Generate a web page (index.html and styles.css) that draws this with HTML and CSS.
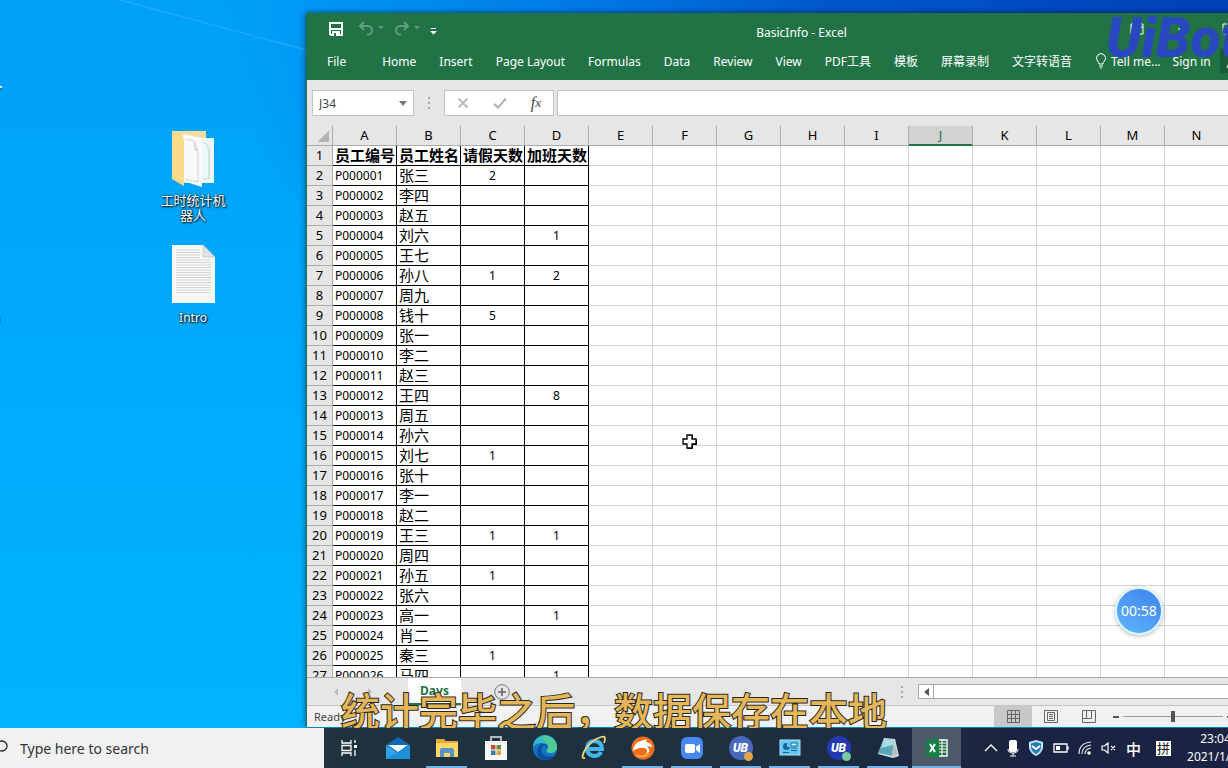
FILE: index.html
```
<!DOCTYPE html>
<html lang="zh-CN">

<head>
  <meta charset="UTF-8">
  <meta name="viewport" content="width=device-width, initial-scale=1.0">
  <title>BasicInfo - Excel</title>
  <link rel="stylesheet" href="styles.css">
</head>

<body>
  <main class="desktop">
    <svg class="light" width="310" height="330" viewBox="0 0 310 330">
      <path d="M120 0L306 50" stroke="#39b4ff" stroke-width="1.500" opacity=".5" />
      <path d="M0 87H2" stroke="#fff" stroke-width="2" />
      <path d="M0 89H2" stroke="#123" opacity=".6" />
      <path d="M0 317V323" stroke="#123" opacity=".6" />
    </svg>
    <a class="desktop-icon folder" href="#">
      <svg width="48" height="60" viewBox="0 0 48 60">
        <path d="M3 2H37V10H43V54H14L3 50Z" fill="#f3dc9c" />
        <path d="M26 9H45V54H33V58L26 52Z" fill="#eef8fa" />
        <path d="M34 12L39 17V20H40V50H34" fill="none" stroke="#c5cbcf" />
        <path d="M14 5L33 9V58L14 52Z" fill="#fafafa" />
        <path d="M16 10L25 12L29 22V53L16 50" fill="none" stroke="#d2d4d6" />
        <path d="M24 12L29 22H26Z" fill="#d5d8da" />
        <path d="M3 2L12 6Q15 8 15 12V57L3 50Z" fill="#fadb89" />
      </svg>
      <span>工时统计机<br>器人</span>
    </a>
    <a class="desktop-icon document" href="#">
      <svg width="48" height="60" viewBox="0 0 48 60">
        <path d="M3 1H34L46 13V59H3Z" fill="#f8f8f8" />
        <path d="M34 1V13H46Z" fill="#dfe3e6" stroke="#b5babd" stroke-width=".6" />
        <path d="M7 6H31M7 8.500H31M7 11H31M7 13.500H31M7 16H42M7 18.500H42M7 21H42M7 23.500H42M7 26H42M7 28.500H42M7 31H42M7 33.500H42M7 36H42M7 38.500H42M7 41H42M7 43.500H42M7 46H42M7 48.500H42" stroke="#cfcfcf" stroke-width=".9" />
      </svg>
      <span>Intro</span>
    </a>

    <section class="window">
      <header class="ribbon">
        <div class="titlebar">
          <div class="quick-access">
            <button aria-label="Save"><svg width="16" height="16" viewBox="0 0 16 16"><path d="M2 2H14V14H3L2 13Z" fill="none" stroke="#fff" stroke-width="2" /><path d="M2 8H14" stroke="#fff" stroke-width="2" /><path d="M4 10H12V15H4Z" fill="#fff" /><path d="M6 12H8V15H6Z" fill="#217346" /></svg></button>
            <button class="faded" aria-label="Undo"><svg width="26" height="16" viewBox="0 0 26 16"><path d="M6 1L2 5L6 9M2 5H9Q14 5 14 9.500T9 13.500" fill="none" stroke="#fff" stroke-width="2" /><path d="M20 5H26L23 8Z" fill="#fff" /></svg></button>
            <button class="faded" aria-label="Redo"><svg width="26" height="16" viewBox="0 0 26 16"><path d="M10 1L14 5L10 9M14 5H7Q2 5 2 9.500T7 13.500" fill="none" stroke="#fff" stroke-width="2" /><path d="M20 5H26L23 8Z" fill="#fff" /></svg></button>
            <button aria-label="Customize"><svg width="7" height="16" viewBox="0 0 7 16"><path d="M1 7.500H6" stroke="#fff" /><path d="M0 10H7L3.500 13.500Z" fill="#fff" /></svg></button>
          </div>
          <h1>BasicInfo - Excel</h1>
          <div class="window-buttons">
            <button aria-label="Ribbon options"><svg width="14" height="12" viewBox="0 0 14 12"><path d="M1 1H13V11H1ZM1 4H13" fill="none" stroke="#fff" /></svg></button>
            <button aria-label="Minimize"><svg width="12" height="12" viewBox="0 0 12 12"><path d="M1 6H11" stroke="#fff" /></svg></button>
            <button aria-label="Restore"><svg width="12" height="12" viewBox="0 0 12 12"><path d="M1 1H11V11H1Z" fill="none" stroke="#fff" /></svg></button>
          </div>
        </div>
        <nav class="tabs">
          <a class="file" href="#">File</a>
          <a href="#">Home</a>
          <a href="#">Insert</a>
          <a href="#">Page Layout</a>
          <a href="#">Formulas</a>
          <a href="#">Data</a>
          <a href="#">Review</a>
          <a href="#">View</a>
          <a href="#">PDF工具</a>
          <a href="#">模板</a>
          <a href="#">屏幕录制</a>
          <a href="#">文字转语音</a>
          <a class="tell-me" href="#"><svg width="12" height="16" viewBox="0 0 12 16"><path d="M4 11Q4 9.500 2.500 8A4.500 4.500 0 1 1 9.500 8Q8 9.500 8 11ZM4 13H8M5 15H7" fill="none" stroke="#fff" /></svg>Tell me...</a>
          <a class="sign-in" href="#">Sign in</a>
          <a class="share" href="#"><svg width="14" height="14" viewBox="0 0 14 14"><circle cx="7" cy="4" r="3" fill="none" stroke="#fff" /><path d="M1 14Q2 8 7 8T13 14" fill="none" stroke="#fff" /></svg>Share</a>
        </nav>
      </header>

      <div class="formula-bar">
        <div class="name-box">
          <input type="text" value="J34" aria-label="Name box">
          <svg width="8" height="5" viewBox="0 0 8 5"><path d="M0 0H8L4 5Z" fill="#777" /></svg>
        </div>
        <svg class="grip" width="2" height="12" viewBox="0 0 2 12"><path d="M0 0H2V2H0ZM0 5H2V7H0ZM0 10H2V12H0Z" fill="#a8a8a8" /></svg>
        <div class="formula-buttons">
          <button aria-label="Cancel"><svg width="12" height="12" viewBox="0 0 12 12"><path d="M1.500 1.500L10.500 10.500M10.500 1.500L1.500 10.500" stroke="#b8b8b8" stroke-width="1.800" /></svg></button>
          <button aria-label="Enter"><svg width="14" height="12" viewBox="0 0 14 12"><path d="M1 7L5 10.500L13 1.500" fill="none" stroke="#b8b8b8" stroke-width="2.400" /></svg></button>
          <button class="fx" aria-label="Insert function">f<small>x</small></button>
        </div>
        <input class="formula" type="text" aria-label="Formula">
      </div>

      <div class="sheet">
        <table>
          <thead>
            <tr id="columns"></tr>
          </thead>
          <tbody id="rows"></tbody>
        </table>
      </div>

      <div class="sheet-tabs">
        <div class="arrows">
          <svg width="4" height="8" viewBox="0 0 4 8"><path d="M4 0V8L0 4Z" fill="#bbb" /></svg>
          <svg width="4" height="8" viewBox="0 0 4 8"><path d="M0 0V8L4 4Z" fill="#bbb" /></svg>
        </div>
        <button class="sheet-tab">Days</button>
        <button class="add" aria-label="New sheet"><svg width="16" height="16" viewBox="0 0 16 16"><circle cx="8" cy="8" r="7.300" fill="none" stroke="#777" /><path d="M4 8H12M8 4V12" stroke="#666" stroke-width="1.600" /></svg></button>
        <svg class="grip" width="2" height="12" viewBox="0 0 2 12"><path d="M0 0H2V2H0ZM0 5H2V7H0ZM0 10H2V12H0Z" fill="#a8a8a8" /></svg>
        <div class="scrollbar">
          <button aria-label="Scroll left"><svg width="5" height="8" viewBox="0 0 5 8"><path d="M5 0V8L0 4Z" fill="#555" /></svg></button>
        </div>
      </div>

      <footer class="status">
        <span>Ready</span>
        <div class="views">
          <button class="active" aria-label="Normal"><svg width="13" height="13" viewBox="0 0 13 13"><path d="M.500 .500H12.500V12.500H.500ZM4.500 0V13M8.500 0V13M0 4.500H13M0 8.500H13" fill="none" stroke="#666" /></svg></button>
          <button aria-label="Page layout"><svg width="14" height="13" viewBox="0 0 14 13"><path d="M.500 .500H13.500V12.500H.500ZM3.500 2.500H10.500V10.500H3.500ZM5 4.500H9M5 6.500H9M5 8.500H9" fill="none" stroke="#666" /></svg></button>
          <button aria-label="Page break"><svg width="14" height="13" viewBox="0 0 14 13"><path d="M.500 .500H13.500V12.500H.500ZM0 8.500H9.500V0M4.500 0V8" fill="none" stroke="#666" /></svg></button>
        </div>
        <div class="zoom">
          <svg width="6" height="2" viewBox="0 0 6 2"><path d="M0 0H6V2H0Z" fill="#555" /></svg>
          <input type="range" min="0" max="100" value="50" aria-label="Zoom">
          <svg width="8" height="8" viewBox="0 0 8 8"><path d="M0 4H8M4 0V8" stroke="#555" stroke-width="2" /></svg>
        </div>
      </footer>
    </section>

    <svg class="cursor" width="15" height="15" viewBox="0 0 15 15"><path d="M5 1H10V5H14V10H10V14H5V10H1V5H5Z" fill="#fff" stroke="#000" stroke-width="1.300" /><path d="M10.500 1.500V5M14.500 5.500V10.500H10.500V14.500H5.500" fill="none" stroke="#000" /></svg>
    <div class="timer">00:58</div>
    <div class="watermark">UiBot</div>
    <p class="subtitle">统计完毕之后，数据保存在本地</p>
  </main>

  <footer class="taskbar">
    <label class="search">
      <svg width="12" height="16" viewBox="0 0 12 16"><circle cx="6" cy="6" r="5" fill="none" stroke="#222" stroke-width="1.300" /></svg>
      <input type="text" placeholder="Type here to search">
    </label>
    <nav class="apps">
      <button aria-label="Task view"><svg width="18" height="18" viewBox="0 0 18 18"><path d="M2 1V4H11V1M2 17V14H11V17M2 6.500H11V11.500H2ZM15 1V4M15 11V17" fill="none" stroke="#fff" stroke-width="1.300" /><path d="M14 6H17V9H14Z" fill="#fff" /></svg></button>
      <button aria-label="Mail"><svg width="26" height="24" viewBox="0 0 26 24"><path d="M1 9L13 1L25 9V23H1Z" fill="#1267b5" /><path d="M1 9L13 17L25 9V23H1Z" fill="#2da5e8" /><path d="M3 9H23L13 16Z" fill="#f4fbff" /><path d="M1 23L25 10V23Z" fill="#1683ce" opacity=".6" /></svg></button>
      <button class="open" aria-label="File Explorer"><svg width="24" height="22" viewBox="0 0 24 22"><path d="M1 2H9L11 4H23V20H1Z" fill="#e8a93a" /><path d="M1 6H23V20H1Z" fill="#ffd867" /><path d="M5 20V13Q5 11 7 11H17Q19 11 19 13V20H15V16H9V20Z" fill="#5794c3" /></svg></button>
      <button aria-label="Store"><svg width="24" height="26" viewBox="0 0 24 26"><path d="M7 8V2H17V8" fill="none" stroke="#e5e5e5" stroke-width="1.500" /><path d="M1 6H23V25H1Z" fill="#f7f7f7" /><path d="M7 10H11.500V14.500H7Z" fill="#c74d31" /><path d="M12.500 10H17V14.500H12.500Z" fill="#6d8b35" /><path d="M7 15.500H11.500V20H7Z" fill="#347cae" /><path d="M12.500 15.500H17V20H12.500Z" fill="#dba43c" /></svg></button>
      <button aria-label="Edge"><svg width="26" height="26" viewBox="0 0 26 26"><circle cx="13" cy="13" r="12" fill="#1475c4" /><path d="M1 12A12 12 0 0 1 25 12Q25 18 18 18Q14 18 15 15Q17 8 10 8Q4 8 1 12Z" fill="#35b8d4" /><path d="M14 1A12 12 0 0 1 25 13Q24 18 18 18Q14 18 15 15Q18 7 8 3Z" fill="#55cf83" opacity=".8" /><path d="M15 15Q16 11 12 10Q8 13 10 18Q13 23 22 21Q17 26 11 25Q4 22 5 15Q7 9 12 9Q18 9 15 15Z" fill="#0c4f9d" /></svg></button>
      <button aria-label="Internet Explorer"><svg width="26" height="26" viewBox="0 0 26 26"><path d="M20 17Q18 21 13 21Q6 20 6 13Q7 6 14 6Q21 7 21 14H7" fill="none" stroke="#45b6ec" stroke-width="4" /><path d="M4 23Q-1 24 4 15Q10 5 20 2Q26 0 23 8" fill="none" stroke="#ecd173" stroke-width="1.800" /></svg></button>
      <button class="open" aria-label="Browser"><svg width="24" height="24" viewBox="0 0 24 24"><circle cx="12" cy="12" r="11.500" fill="#ef6f18" /><path d="M2 15Q3 6 10 5L16 3L15 6Q21 7 21 11L16 10Q21 15 15 18Q18 13 13 12Q7 11 2 15Z" fill="#fff" /><path d="M5 19Q12 23 18 17" fill="none" stroke="#ffa84f" stroke-width="2" /></svg></button>
      <button class="open" aria-label="Meeting"><svg width="24" height="24" viewBox="0 0 24 24"><rect x="1" y="1" width="22" height="22" rx="6" fill="#4688ef" /><rect x="5" y="8" width="10" height="9" rx="2" fill="#fff" /><path d="M16 11L20 8V17L16 14Z" fill="#fff" /></svg></button>
      <button class="open bot" aria-label="UiBot Creator"><span>UB</span><i class="badge amber"></i></button>
      <button class="open" aria-label="Control Panel"><svg width="22" height="18" viewBox="0 0 22 18"><rect x="1" y="1" width="20" height="15" fill="#65c7ef" stroke="#a9e6ff" /><path d="M8 4A3.500 3.500 0 1 0 11 8H8Z" fill="#176598" /><path d="M12 4H18V7H12ZM12 9H18M12 11.500H18M4 13.500H10" fill="#e9faff" stroke="#176598" /></svg></button>
      <button class="open bot dark" aria-label="UiBot Worker"><span>UB</span><i class="badge green"></i></button>
      <button class="open" aria-label="Notepad"><svg width="24" height="24" viewBox="0 0 24 24"><path d="M8 2L19 3L23 20L17 22L2 18Z" fill="#d8e8e8" /><path d="M8 3L18 4L16 20L2 17Z" fill="#5ba7b9" /><path d="M8 3L18 4L17 9L5 12Z" fill="#a9dce3" /><path d="M18 5L22 19L16 21Z" fill="#b9c1be" /></svg></button>
      <button class="open current" aria-label="Excel"><svg width="24" height="20" viewBox="0 0 24 20"><path d="M10 2H22V18H10Z" fill="#1c6b3c" stroke="#fff" stroke-width="1.400" /><path d="M12 5H21M12 8H21M12 11H21M12 14H21M17 2V18" stroke="#fff" /><path d="M1 2L14 0V20L1 18Z" fill="#148047" /><path d="M5 6L10 14M10 6L5 14" stroke="#fff" stroke-width="2" /></svg></button>
    </nav>
    <div class="tray">
      <svg width="14" height="8" viewBox="0 0 14 8"><path d="M1 7L7 1L13 7" fill="none" stroke="#fff" stroke-width="1.400" /></svg>
      <svg width="12" height="18" viewBox="0 0 12 18"><rect x="2" y="1" width="8" height="12" rx="2" fill="#fff" /><path d="M1 10Q1 14 6 14T11 10M6 14V17M3 17H9" fill="none" stroke="#fff" /></svg>
      <svg width="16" height="16" viewBox="0 0 16 16"><path d="M8 0L15 2V8Q14 13 8 16Q2 13 1 8V2Z" fill="#bfe8ff" /><path d="M8 2L13 3.500V8Q12 12 8 14Q4 12 3 8V3.500Z" fill="#2878b6" /><path d="M4 6L8 9L12 6" fill="none" stroke="#fff" stroke-width="2" /></svg>
      <svg width="16" height="10" viewBox="0 0 16 10"><path d="M1 1H14V9H1ZM15 3.500V6.500" fill="none" stroke="#fff" stroke-width="1.300" /><path d="M3 3H7V7H3Z" fill="#fff" /></svg>
      <svg width="14" height="14" viewBox="0 0 14 14"><path d="M1 13Q1 2 13 1M4 13Q4 5 13 4M7 13Q7 8 13 7" fill="none" stroke="#dce3ed" stroke-width="1.200" /><circle cx="11" cy="12" r="1.800" fill="#fff" /></svg>
      <svg width="16" height="12" viewBox="0 0 16 12"><path d="M1 4H3.500L7 1V11L3.500 8H1ZM10 4L14 8M14 4L10 8" fill="none" stroke="#fff" stroke-width="1.200" /></svg>
      <span class="ime">中</span>
      <span class="pinyin">拼</span>
      <div class="clock"><span>23:04</span><span>2021/1/20</span></div>
    </div>
  </footer>

  <script>
    // id is the row position, the rest is [name, days off, overtime]
    const staff = [
      ['张三', 2, ''],
      ['李四', '', ''],
      ['赵五', '', ''],
      ['刘六', '', 1],
      ['王七', '', ''],
      ['孙八', 1, 2],
      ['周九', '', ''],
      ['钱十', 5, ''],
      ['张一', '', ''],
      ['李二', '', ''],
      ['赵三', '', ''],
      ['王四', '', 8],
      ['周五', '', ''],
      ['孙六', '', ''],
      ['刘七', 1, ''],
      ['张十', '', ''],
      ['李一', '', ''],
      ['赵二', '', ''],
      ['王三', 1, 1],
      ['周四', '', ''],
      ['孙五', 1, ''],
      ['张六', '', ''],
      ['高一', '', 1],
      ['肖二', '', ''],
      ['秦三', 1, ''],
      ['马四', '', 1]
    ];
    const letters = 'ABCDEFGHIJKLMNO'.split('');

    document.querySelector('#columns').innerHTML = '<th class="corner"></th>' + letters.map(letter =>
      `<th class="${letter === 'J' ? 'selected' : ''}">${letter}</th>`).join('');

    const records = [['员工编号', '员工姓名', '请假天数', '加班天数']];
    staff.forEach((person, i) => {
      records.push(['P' + String(i + 1).padStart(6, '0'), ...person]);
    });

    document.querySelector('#rows').innerHTML = records.map((record, i) => {
      const cells = letters.map((letter, j) => j < 4
        ? `<td class="filled col-${letter}">${record[j]}</td>`
        : '<td></td>').join('');
      return `<tr class="${i === 0 ? 'heading' : ''}"><th>${i + 1}</th>${cells}</tr>`;
    }).join('');
  </script>
</body>

</html>
```
FILE: styles.css
```
* {
  box-sizing: border-box;
  margin: 0;
  padding: 0;
}

body {
  display: flex;
  flex-direction: column;
  height: 100vh;
  overflow: hidden;
  font-family: 'Noto Sans', 'Noto Sans CJK SC', sans-serif;
  font-size: 12px;
}

a {
  color: inherit;
  text-decoration: none;
}

button {
  display: flex;
  align-items: center;
  justify-content: center;
  border: none;
  background: transparent;
  font: inherit;
}

input {
  min-width: 0;
  border: none;
  outline: none;
  background: transparent;
  font: inherit;
}

.desktop {
  position: relative;
  flex: 1;
  min-height: 0;
  overflow: hidden;
  background: radial-gradient(ellipse 1000px 600px at 100% 0, #0040b8, #0058cc 40%, #007ae6 65%, #0098f4 92%, #00a0f800), linear-gradient(#00a0f8, #00b4fe);
}

.light {
  position: absolute;
  top: 0;
  left: 0;
}

/* desktop shortcuts */
.desktop-icon {
  position: absolute;
  left: 153px;
  display: flex;
  flex-direction: column;
  align-items: center;
  gap: 4px;
  width: 80px;
  color: white;
  line-height: 15px;
  font-size: 13px;
  text-align: center;
  text-shadow: 1px 1px 2px #000, 0 0 2px #000;
}

.folder {
  top: 129px;
}

.document {
  top: 244px;
}

.document span {
  padding-top: 2px;
  font-size: 12px;
}

/* excel window */
.window {
  position: absolute;
  top: 13px;
  right: -68px;
  bottom: 1px;
  left: 306px;
  display: flex;
  flex-direction: column;
  border-left: 1px solid #217346;
  background: #e6e6e6;
  box-shadow: 0 0 6px rgba(0, 0, 0, 0.6);
}

.ribbon {
  height: 67px;
  background: #217346;
  color: white;
}

.titlebar {
  display: grid;
  grid-template-columns: 1fr auto 1fr;
  align-items: center;
  height: 32px;
}

.quick-access {
  display: flex;
  gap: 10px;
  margin-left: 21px;
}

.quick-access .faded {
  opacity: 0.3;
}

.quick-access button:first-child {
  margin-right: 4px;
}

.titlebar h1 {
  padding-top: 6px;
  font-size: 12px;
  font-weight: 400;
}

.window-buttons {
  display: flex;
  justify-content: flex-end;
  gap: 33px;
  padding-right: 62px;
}

.tabs {
  display: flex;
  align-items: center;
  gap: 23px;
  height: 32px;
  padding-left: 20px;
  white-space: nowrap;
}

.tabs .file {
  margin-right: 13px;
}

.tell-me {
  display: flex;
  align-items: center;
  gap: 4px;
}

.tabs .sign-in {
  margin-left: -11px;
}

.share {
  display: flex;
  align-items: center;
  gap: 4px;
  height: 24px;
  margin-left: -14px;
  padding: 0 6px;
  background: #185c37;
}

.formula-bar {
  display: flex;
  align-items: center;
  height: 46px;
  padding-left: 5px;
}

.name-box {
  display: flex;
  align-items: center;
  width: 102px;
  height: 26px;
  padding: 0 6px;
  border: 1px solid #c3c3c3;
  background: white;
}

.name-box input {
  flex: 1;
  color: #444;
}

.formula-bar .grip {
  margin: 0 14px;
}

.formula-buttons {
  display: flex;
  justify-content: space-around;
  width: 110px;
  height: 26px;
  border: 1px solid #c3c3c3;
  background: white;
}

.fx {
  color: #444;
  font-family: 'Liberation Serif', serif;
  font-size: 16px;
  font-style: italic;
}

.formula {
  flex: 1;
  height: 26px;
  margin-left: 3px;
  border: 1px solid #c3c3c3;
  background: white;
}

/* cells */
.sheet {
  flex: 1;
  min-height: 0;
  overflow: hidden;
  background: white;
}

table {
  width: 986px;
  table-layout: fixed;
  border-collapse: separate;
  border-spacing: 0;
}

th,
td {
  height: 20px;
  border-right: 1px solid #d4d4d4;
  border-bottom: 1px solid #d4d4d4;
  line-height: 19px;
  white-space: nowrap;
  overflow: hidden;
}

th {
  border-color: #ababab;
  background: #e6e6e6;
  font-size: 13px;
  font-weight: 400;
}

.corner {
  width: 26px;
  background: linear-gradient(135deg, #e6e6e6 50%, #b4b4b4 50%) 10px 4px / 12px 12px no-repeat #e6e6e6;
}

th.selected {
  border-bottom-color: #217346;
  background: #d2d2d2;
  box-shadow: inset 0 -1px #217346;
  color: #217346;
}

.filled {
  border-color: #000;
  font-size: 12px;
  text-align: center;
}

.col-A,
.col-B {
  padding-left: 2px;
  text-align: left;
}

.col-B,
.heading .filled {
  font-size: 15px;
}

.heading .filled {
  padding-left: 2px;
  font-weight: 700;
  text-align: left;
}

/* bottom bars */
.sheet-tabs {
  display: flex;
  align-items: center;
  height: 28px;
  border-top: 1px solid #ababab;
}

.arrows {
  display: flex;
  justify-content: space-between;
  width: 101px;
  padding: 0 36px 0 27px;
}

.sheet-tab {
  width: 53px;
  height: 27px;
  border-bottom: 2px solid #217346;
  background: white;
  color: #217346;
  font-size: 12px;
  font-weight: 700;
}

.add {
  margin-left: 33px;
}

.sheet-tabs .grip {
  margin-left: auto;
}

.scrollbar {
  width: 378px;
  height: 15px;
  margin-left: 15px;
  border: 1px solid #ababab;
  background: white;
}

.scrollbar button {
  width: 15px;
  height: 13px;
  border-right: 1px solid #ababab;
}

.status {
  display: flex;
  align-items: center;
  height: 22px;
  padding-left: 7px;
  border-top: 1px solid #c6c6c6;
  background: #f1f1f1;
  color: #444;
  font-size: 11px;
}

.views {
  display: flex;
  align-self: stretch;
  margin-left: auto;
}

.views button {
  width: 38px;
}

.views .active {
  background: #c8c8c8;
}

.zoom {
  display: flex;
  align-items: center;
  gap: 4px;
  width: 188px;
  padding-left: 5px;
}

.zoom input {
  width: 100px;
  height: 12px;
  appearance: none;
  background: linear-gradient(#999, #999) center / 100% 1px no-repeat;
}

.zoom input::-webkit-slider-thumb {
  appearance: none;
  width: 4px;
  height: 11px;
  background: #555;
}

/* overlays */
.cursor {
  position: absolute;
  top: 434px;
  left: 682px;
}

.timer {
  position: absolute;
  right: 65px;
  bottom: 93px;
  width: 48px;
  height: 48px;
  border: 2px solid #d9f5ff;
  border-radius: 50%;
  background: linear-gradient(35deg, #60b6fb, #3c82ec);
  box-shadow: 0 1px 4px rgba(0, 0, 0, 0.3);
  color: white;
  font-size: 14px;
  line-height: 44px;
  text-align: center;
}

.watermark {
  position: absolute;
  top: 6px;
  left: 1106px;
  color: #2947be;
  font-family: Roboto, sans-serif;
  font-size: 55px;
  font-style: italic;
  font-weight: 900;
  line-height: 64px;
}

.subtitle {
  position: absolute;
  bottom: -10px;
  left: 341px;
  color: #e2b659;
  font-family: 'Noto Sans CJK SC', sans-serif;
  font-size: 39px;
  font-weight: 500;
  line-height: 58px;
  white-space: nowrap;
  -webkit-text-stroke: 2px #2c2718;
  paint-order: stroke fill;
}

/* taskbar */
.taskbar {
  display: flex;
  height: 40px;
  background: linear-gradient(90deg, #20363f, #1e303f 60%, #1a2342 85%);
  color: white;
}

.search {
  display: flex;
  align-items: center;
  gap: 12px;
  width: 324px;
  overflow: hidden;
  background: #f1f1f1;
}

.search svg {
  flex: none;
  margin-left: -4px;
}

.search input {
  flex: 1;
  font-size: 14px;
}

.search input::placeholder {
  color: #333;
}

.apps {
  display: flex;
}

.apps button {
  position: relative;
  width: 49px;
}

.open::after {
  content: '';
  position: absolute;
  right: 4px;
  bottom: 0;
  left: 4px;
  height: 2px;
  background: #76b1e8;
}

.apps .current {
  background: #4b5968;
}

.current::after {
  right: 0;
  left: 0;
}

.bot span {
  width: 24px;
  height: 24px;
  border-radius: 50%;
  background: #4969bd;
  font-family: Roboto, sans-serif;
  font-size: 12px;
  font-style: italic;
  font-weight: 900;
  line-height: 24px;
}

.bot {
  color: white;
}

.dark span {
  background: #2439b0;
}

.badge {
  position: absolute;
  right: 12px;
  bottom: 7px;
  width: 9px;
  height: 9px;
  border-radius: 50%;
}

.amber {
  background: #e0a545;
}

.green {
  background: #79c99a;
}

.tray {
  display: flex;
  flex: 1;
  align-items: center;
  gap: 9px;
  min-width: 0;
  padding-left: 23px;
}

.tray svg {
  flex: none;
}

.ime {
  font-size: 15px;
  font-weight: 500;
}

.pinyin {
  flex: none;
  width: 15px;
  height: 15px;
  margin-left: 6px;
  background: white;
  color: #111;
  font-size: 13px;
  line-height: 15px;
  text-align: center;
}

.clock {
  display: flex;
  flex-direction: column;
  align-items: center;
  margin-left: 7px;
  line-height: 18px;
}
```
